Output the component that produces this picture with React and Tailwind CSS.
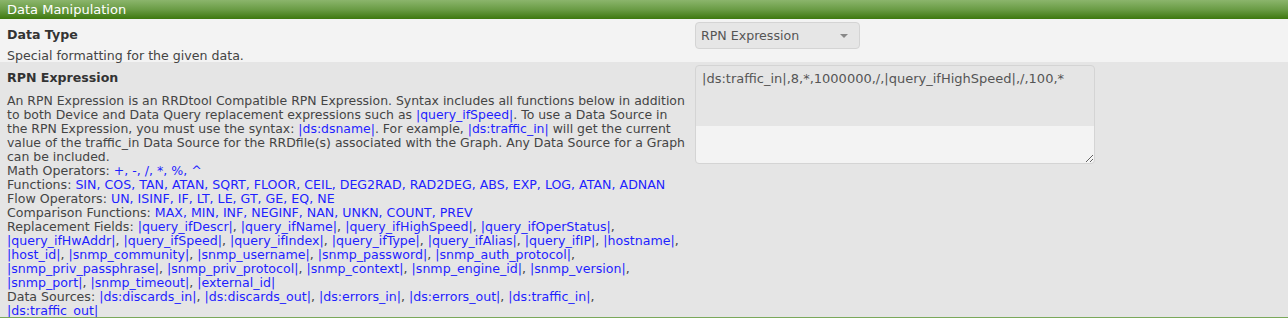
import React from 'react';

const B = ({ children }) => <span className="text-[#1f1fff]">{children}</span>;

const lines = [
  ['Math Operators: ', '+, -, /, *, %, ^'],
  ['Functions: ', 'SIN, COS, TAN, ATAN, SQRT, FLOOR, CEIL, DEG2RAD, RAD2DEG, ABS, EXP, LOG, ATAN, ADNAN'],
  ['Flow Operators: ', 'UN, ISINF, IF, LT, LE, GT, GE, EQ, NE'],
  ['Comparison Functions: ', 'MAX, MIN, INF, NEGINF, NAN, UNKN, COUNT, PREV'],
];

const replacement = [
  'query_ifDescr', 'query_ifName', 'query_ifHighSpeed', 'query_ifOperStatus',
  'query_ifHwAddr', 'query_ifSpeed', 'query_ifIndex', 'query_ifType', 'query_ifAlias', 'query_ifIP', 'hostname',
  'host_id', 'snmp_community', 'snmp_username', 'snmp_password', 'snmp_auth_protocol',
  'snmp_priv_passphrase', 'snmp_priv_protocol', 'snmp_context', 'snmp_engine_id', 'snmp_version',
  'snmp_port', 'snmp_timeout', 'external_id',
];

const sources = ['ds:discards_in', 'ds:discards_out', 'ds:errors_in', 'ds:errors_out', 'ds:traffic_in', 'ds:traffic_out'];

const List = ({ items }) =>
  items.map((it, i) => (
    <React.Fragment key={it}>
      <B>|{it}|</B>
      {i < items.length - 1 ? ', ' : ''}
    </React.Fragment>
  ));

const font = { fontFamily: '"DejaVu Sans", Verdana, sans-serif' };

export default function App() {
  return (
    <div className="w-[1288px] h-[318px] bg-white text-[12.6px] leading-[14px] text-[#444]" style={font}>
      {/* Header */}
      <div className="h-[19px] bg-[linear-gradient(to_bottom,#8bb56c,#6a9c45_50%,#3d780e)] text-white text-[13px] leading-[19px] px-[7px]">
        Data Manipulation
      </div>

      {/* Data Type row */}
      <div className="flex h-[43px] bg-[#f3f3f3]">
        <div className="w-[695px] pl-[7px] pt-[9px]">
          <div className="font-bold text-[#333]">Data Type</div>
          <div className="mt-[7px]">Special formatting for the given data.</div>
        </div>
        <div className="pt-[3px]">
          <div className="w-[165px] h-[27px] rounded-[4px] border border-[#d4d4d4] bg-[#e6e6e6] flex items-center justify-between pl-[5px] pr-[11px] text-[#555]">
            <span>RPN Expression</span>
            <span className="w-0 h-0 border-l-[4px] border-r-[4px] border-t-[4px] border-l-transparent border-r-transparent border-t-[#888]" />
          </div>
        </div>
      </div>

      {/* RPN Expression row */}
      <div className="flex h-[256px] overflow-hidden bg-[#e5e5e5] border-b border-[#7aa85a]">
        <div className="w-[695px] shrink-0 pl-[7px] pt-[9px]">
          <div className="font-bold text-[#333]">RPN Expression</div>
          <div className="mt-[9px] text-[12.45px] whitespace-nowrap">
            <div>An RPN Expression is an RRDtool Compatible RPN Expression. Syntax includes all functions below in addition</div>
            <div>to both Device and Data Query replacement expressions such as <B>|query_ifSpeed|</B>. To use a Data Source in</div>
            <div>the RPN Expression, you must use the syntax: <B>|ds:dsname|</B>. For example, <B>|ds:traffic_in|</B> will get the current</div>
            <div>value of the traffic_in Data Source for the RRDfile(s) associated with the Graph. Any Data Source for a Graph</div>
            <div>can be included.</div>
          </div>
          {lines.map(([k, v]) => (
            <div key={k}>
              {k}
              <B>{v}</B>
            </div>
          ))}
          <div className="w-[684px]">
            Replacement Fields: <List items={replacement} />
          </div>
          <div className="w-[682px]">
            Data Sources: <List items={sources} />
          </div>
        </div>
        <div className="pt-[3px]">
          <textarea
            className="block w-[400px] h-[99px] rounded-[4px] border border-[#d4d4d4] bg-[linear-gradient(to_bottom,#e5e5e5_62%,#f3f3f3_62%)] px-[6px] py-[5px] text-[13px] leading-[15px] text-[#555] outline-none"
            style={font}
            defaultValue="|ds:traffic_in|,8,*,1000000,/,|query_ifHighSpeed|,/,100,*"
          />
        </div>
      </div>
    </div>
  );
}
